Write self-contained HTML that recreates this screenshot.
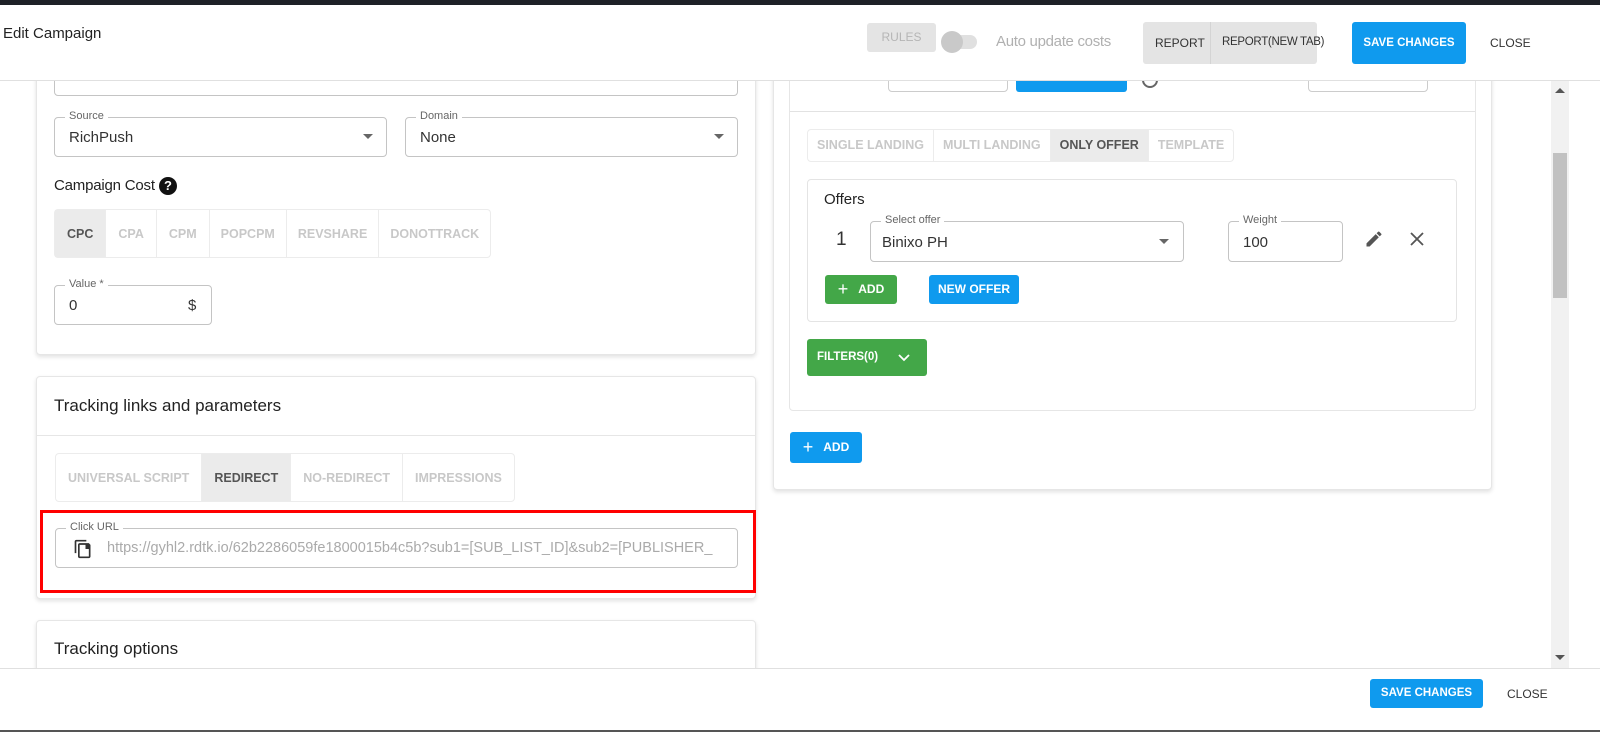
<!DOCTYPE html>
<html><head><meta charset="utf-8"><style>
*{box-sizing:border-box;margin:0;padding:0}
body{width:1600px;height:732px;overflow:hidden;background:#fff;font-family:"Liberation Sans",Arial,sans-serif;color:#222;position:relative}
.a{position:absolute}
.hz{z-index:10}
.card{position:absolute;background:#fff;border:1px solid #e6e6e6;border-radius:4px;box-shadow:0 2px 4px rgba(0,0,0,.12)}
.fld{position:absolute;border:1px solid #c4c4c4;border-radius:4px;background:#fff}
.lbl{position:absolute;top:-8px;left:10px;background:#fff;padding:0 4px;font-size:11px;color:#666}
.val{position:absolute;font-size:15px;color:#333}
.arr{position:absolute;width:0;height:0;border-left:5px solid transparent;border-right:5px solid transparent;border-top:5px solid #666}
.tabs{position:absolute;display:flex;border:1px solid #ececec;border-radius:4px;height:40px}
.tabs div{padding:0 12px;font-size:12.5px;font-weight:bold;color:#c8c8c8;line-height:40px;border-right:1px solid #ececec;white-space:nowrap}
.tabs div:last-child{border-right:0}
.tabs .on{background:#ebebeb;color:#555}
.btn{position:absolute;border-radius:3px;color:#fff;font-size:12px;font-weight:bold;text-align:center}
</style></head><body>

<!-- left card 1 -->
<div class="card" style="left:36px;top:40px;width:720px;height:315px"></div>
<div class="fld" style="left:54px;top:60px;width:684px;height:36px"></div>
<div class="fld" style="left:54px;top:117px;width:333px;height:40px"><span class="lbl">Source</span><span class="val" style="left:14px;top:11px">RichPush</span><span class="arr" style="left:308px;top:16px"></span></div>
<div class="fld" style="left:405px;top:117px;width:333px;height:40px"><span class="lbl">Domain</span><span class="val" style="left:14px;top:11px">None</span><span class="arr" style="left:308px;top:16px"></span></div>
<div class="a" style="left:54px;top:177px;font-size:15px;letter-spacing:-.2px">Campaign Cost</div>
<div class="a" style="left:159px;top:177px;width:18px;height:18px;border-radius:50%;background:#111;color:#fff;font-size:13px;font-weight:bold;text-align:center;line-height:18px">?</div>
<div class="tabs" style="left:54px;top:209px;height:49px"><div class="on" style="line-height:49px;padding:0 12px">CPC</div><div style="line-height:49px;padding:0 12px">CPA</div><div style="line-height:49px;padding:0 12px">CPM</div><div style="line-height:49px;padding:0 11px">POPCPM</div><div style="line-height:49px;padding:0 11px">REVSHARE</div><div style="line-height:49px;padding:0 11px">DONOTTRACK</div></div>
<div class="fld" style="left:54px;top:285px;width:158px;height:40px"><span class="lbl">Value *</span><span class="val" style="left:14px;top:11px">0</span><span class="val" style="left:133px;top:11px">$</span></div>

<!-- left card 2 -->
<div class="card" style="left:36px;top:376px;width:720px;height:223px"></div>
<div class="a" style="left:54px;top:396px;font-size:17px">Tracking links and parameters</div>
<div class="a" style="left:37px;top:435px;width:718px;height:1px;background:#e6e6e6"></div>
<div class="tabs" style="left:55px;top:453px;height:49px"><div style="line-height:49px">UNIVERSAL SCRIPT</div><div class="on" style="line-height:49px">REDIRECT</div><div style="line-height:49px">NO-REDIRECT</div><div style="line-height:49px">IMPRESSIONS</div></div>
<div class="a" style="left:40px;top:510px;width:716px;height:83px;border:3px solid #f00"></div>
<div class="fld" style="left:55px;top:528px;width:683px;height:40px"><span class="lbl">Click URL</span>
<svg class="a" style="left:17px;top:10px" width="20" height="20" viewBox="0 0 24 24"><path d="M16 1H4c-1.1 0-2 .9-2 2v14h2V3h12V1zm3 4H8c-1.1 0-2 .9-2 2v14c0 1.1.9 2 2 2h11c1.1 0 2-.9 2-2V7l-2-2zm0 16H8V7h7v5h4v9z" fill="#333"/></svg>
<span class="val" style="left:51px;top:11px;color:#aaa;font-size:14.5px;white-space:nowrap;width:628px;overflow:hidden">https://gyhl2.rdtk.io/62b2286059fe1800015b4c5b?sub1=[SUB_LIST_ID]&amp;sub2=[PUBLISHER_</span></div>

<!-- left card 3 -->
<div class="card" style="left:36px;top:620px;width:720px;height:80px"></div>
<div class="a" style="left:54px;top:639px;font-size:17px">Tracking options</div>

<!-- right outer card -->
<div class="card" style="left:773px;top:40px;width:719px;height:450px"></div>
<div class="a" style="left:789px;top:40px;width:687px;height:371px;border:1px solid #e6e6e6;border-radius:4px"></div>
<div class="a" style="left:790px;top:111px;width:685px;height:1px;background:#e2e2e2"></div>
<div class="a" style="left:888px;top:60px;width:120px;height:32px;border:1px solid #ccc;border-radius:4px"></div>
<div class="a" style="left:1016px;top:60px;width:111px;height:32px;background:#0f9aee;border-radius:3px"></div>
<div class="a" style="left:1142px;top:72px;width:16px;height:16px;border:2px solid #666;border-radius:50%"></div>
<div class="a" style="left:1308px;top:60px;width:120px;height:32px;border:1px solid #ccc;border-radius:4px"></div>
<div class="tabs" style="left:807px;top:129px;height:33px"><div style="line-height:31px;padding:0 9px">SINGLE LANDING</div><div style="line-height:31px;padding:0 9px">MULTI LANDING</div><div class="on" style="line-height:31px;padding:0 9px">ONLY OFFER</div><div style="line-height:31px;padding:0 9px">TEMPLATE</div></div>
<div class="a" style="left:807px;top:179px;width:650px;height:143px;border:1px solid #e4e4e4;border-radius:4px"></div>
<div class="a" style="left:824px;top:191px;font-size:15px">Offers</div>
<div class="a" style="left:836px;top:229px;font-size:19px;color:#333">1</div>
<div class="fld" style="left:870px;top:221px;width:314px;height:41px"><span class="lbl">Select offer</span><span class="val" style="left:11px;top:12px">Binixo PH</span><span class="arr" style="left:288px;top:17px"></span></div>
<div class="fld" style="left:1228px;top:221px;width:115px;height:41px"><span class="lbl">Weight</span><span class="val" style="left:14px;top:12px">100</span></div>
<svg class="a" style="left:1364px;top:229px" width="20" height="20" viewBox="0 0 24 24"><path d="M3 17.25V21h3.75L17.81 9.94l-3.75-3.75L3 17.25zM20.71 7.04a1 1 0 0 0 0-1.41l-2.34-2.34a1 1 0 0 0-1.41 0l-1.83 1.83 3.75 3.75 1.83-1.830z" fill="#555"/></svg>
<svg class="a" style="left:1408px;top:230px" width="18" height="18" viewBox="0 0 18 18"><path d="M3 3L15 15M15 3L3 15" stroke="#555" stroke-width="1.8"/></svg>
<div class="btn" style="left:825px;top:275px;width:72px;height:29px;background:#43a748;line-height:29px"><span style="font-size:18px;font-weight:normal;vertical-align:-2px;margin-right:10px">+</span>ADD</div>
<div class="btn" style="left:929px;top:275px;width:90px;height:29px;background:#0f9aee;line-height:29px">NEW OFFER</div>
<div class="btn" style="left:807px;top:339px;width:120px;height:37px;background:#43a748;line-height:37px;text-align:left;padding-left:10px;font-size:11.5px">FILTERS(0)<svg style="position:absolute;left:91px;top:14px" width="12" height="9" viewBox="0 0 12 9"><path d="M1 2l5 5 5-5" stroke="#fff" stroke-width="1.8" fill="none"/></svg></div>
<div class="btn" style="left:790px;top:432px;width:72px;height:31px;background:#0f9aee;line-height:31px"><span style="font-size:18px;font-weight:normal;vertical-align:-2px;margin-right:10px">+</span>ADD</div>

<!-- scrollbar -->
<div class="a" style="left:1551px;top:81px;width:18px;height:587px;background:#f1f1f1"></div>
<div class="a" style="left:1553px;top:153px;width:14px;height:145px;background:#c1c1c1"></div>
<div class="arr" style="left:1555px;top:88px;border-top:0;border-bottom:5px solid #555"></div>
<div class="arr" style="left:1555px;top:655px;border-top-color:#555"></div>

<!-- header -->
<div class="a hz" style="left:0;top:0;width:1600px;height:5px;background:#1e2127"></div>
<div class="a hz" style="left:0;top:5px;width:1600px;height:76px;background:#fff;border-bottom:1px solid #e0e0e0"></div>
<div class="a hz" style="left:3px;top:25px;font-size:15px;color:#222">Edit Campaign</div>
<div class="a hz" style="left:867px;top:23px;width:69px;height:29px;background:#e4e4e4;border-radius:3px;color:#b5b5b5;font-size:12px;text-align:center;line-height:29px">RULES</div>
<div class="a hz" style="left:945px;top:35px;width:32px;height:14px;background:#e0e0e0;border-radius:7px"></div>
<div class="a hz" style="left:941px;top:31px;width:22px;height:22px;background:#c9c9c9;border-radius:50%"></div>
<div class="a hz" style="left:996px;top:33px;font-size:15px;color:#b0b0b0;letter-spacing:-.3px">Auto update costs</div>
<div class="a hz" style="left:1143px;top:22px;width:174px;height:42px;background:#e4e4e4;border-radius:3px"></div>
<div class="a hz" style="left:1210px;top:22px;width:1px;height:42px;background:#d4d4d4"></div>
<div class="a hz" style="left:1155px;top:36px;font-size:12px;color:#333">REPORT</div>
<div class="a hz" style="left:1222px;top:36px;font-size:11.5px;color:#333;letter-spacing:-.3px">REPORT(NEW TAB)</div>
<div class="btn hz" style="left:1352px;top:22px;width:114px;height:42px;background:#0f9aee;line-height:42px;font-size:11.5px">SAVE CHANGES</div>
<div class="a hz" style="left:1490px;top:36px;font-size:12px;color:#333">CLOSE</div>

<!-- footer -->
<div class="a hz" style="left:0;top:668px;width:1600px;height:63px;background:#fff;border-top:1px solid #e0e0e0"></div>
<div class="btn hz" style="left:1370px;top:679px;width:113px;height:29px;background:#0f9aee;line-height:29px;font-size:11.5px">SAVE CHANGES</div>
<div class="a hz" style="left:1507px;top:687px;font-size:12px;color:#333">CLOSE</div>
<div class="a hz" style="left:0;top:730px;width:1600px;height:2px;background:#555"></div>
</body></html>
